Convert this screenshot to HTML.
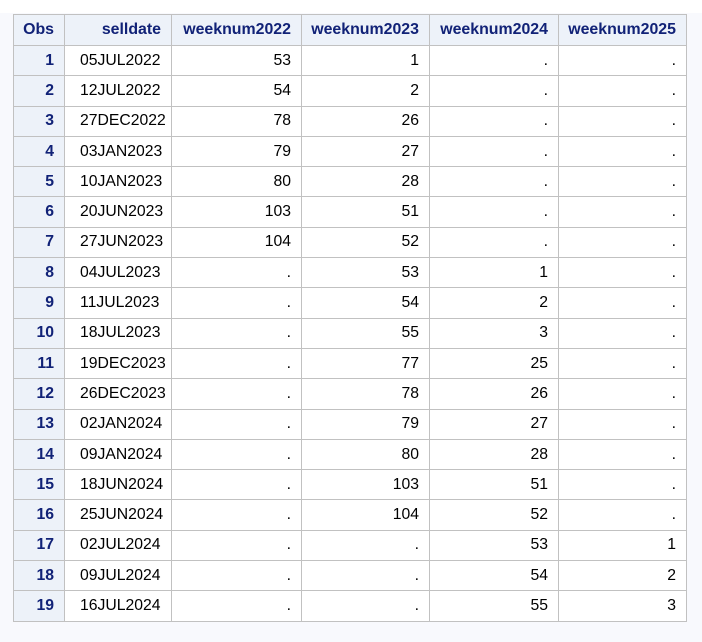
<!DOCTYPE html>
<html><head><style>
html,body{margin:0;padding:0;background:#fff;width:702px;height:642px;overflow:hidden}
.bg{position:absolute;left:0;top:13px;width:702px;height:629px;background:#f8f9fd}
table{position:absolute;left:13px;top:14px;width:673px;table-layout:fixed;border-collapse:collapse;font-family:"Liberation Sans",Arial,sans-serif;font-size:15.75px;background:#fff}
td,th{border:1px solid #c1c1c1;padding:0 10px 0 0;text-align:right;box-sizing:border-box;white-space:nowrap;overflow:visible}
th{background:#edf2f9;color:#112277;font-weight:bold;height:31px;font-size:15.9px}
td{height:30.3px;color:#000}
td.o{background:#edf2f9;color:#112277;font-weight:bold}
td.d{text-align:left;padding-left:15px}
</style></head><body>
<div class="bg"></div>
<table>
<colgroup><col style="width:51px"><col style="width:107px"><col style="width:130px"><col style="width:128px"><col style="width:129px"><col style="width:128px"></colgroup>
<tr><th>Obs</th><th>selldate</th><th>weeknum2022</th><th>weeknum2023</th><th>weeknum2024</th><th>weeknum2025</th></tr>
<tr><td class="o">1</td><td class="d">05JUL2022</td><td>53</td><td>1</td><td>.</td><td>.</td></tr>
<tr><td class="o">2</td><td class="d">12JUL2022</td><td>54</td><td>2</td><td>.</td><td>.</td></tr>
<tr><td class="o">3</td><td class="d">27DEC2022</td><td>78</td><td>26</td><td>.</td><td>.</td></tr>
<tr><td class="o">4</td><td class="d">03JAN2023</td><td>79</td><td>27</td><td>.</td><td>.</td></tr>
<tr><td class="o">5</td><td class="d">10JAN2023</td><td>80</td><td>28</td><td>.</td><td>.</td></tr>
<tr><td class="o">6</td><td class="d">20JUN2023</td><td>103</td><td>51</td><td>.</td><td>.</td></tr>
<tr><td class="o">7</td><td class="d">27JUN2023</td><td>104</td><td>52</td><td>.</td><td>.</td></tr>
<tr><td class="o">8</td><td class="d">04JUL2023</td><td>.</td><td>53</td><td>1</td><td>.</td></tr>
<tr><td class="o">9</td><td class="d">11JUL2023</td><td>.</td><td>54</td><td>2</td><td>.</td></tr>
<tr><td class="o">10</td><td class="d">18JUL2023</td><td>.</td><td>55</td><td>3</td><td>.</td></tr>
<tr><td class="o">11</td><td class="d">19DEC2023</td><td>.</td><td>77</td><td>25</td><td>.</td></tr>
<tr><td class="o">12</td><td class="d">26DEC2023</td><td>.</td><td>78</td><td>26</td><td>.</td></tr>
<tr><td class="o">13</td><td class="d">02JAN2024</td><td>.</td><td>79</td><td>27</td><td>.</td></tr>
<tr><td class="o">14</td><td class="d">09JAN2024</td><td>.</td><td>80</td><td>28</td><td>.</td></tr>
<tr><td class="o">15</td><td class="d">18JUN2024</td><td>.</td><td>103</td><td>51</td><td>.</td></tr>
<tr><td class="o">16</td><td class="d">25JUN2024</td><td>.</td><td>104</td><td>52</td><td>.</td></tr>
<tr><td class="o">17</td><td class="d">02JUL2024</td><td>.</td><td>.</td><td>53</td><td>1</td></tr>
<tr><td class="o">18</td><td class="d">09JUL2024</td><td>.</td><td>.</td><td>54</td><td>2</td></tr>
<tr><td class="o">19</td><td class="d">16JUL2024</td><td>.</td><td>.</td><td>55</td><td>3</td></tr>
</table>
</body></html>
